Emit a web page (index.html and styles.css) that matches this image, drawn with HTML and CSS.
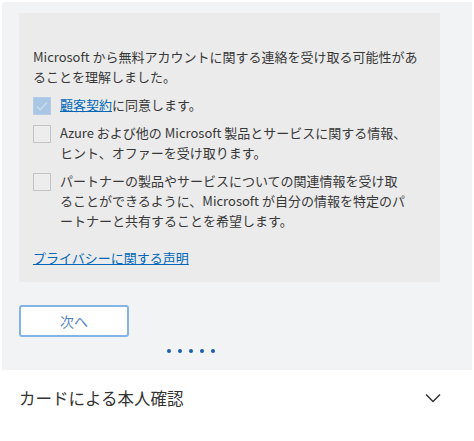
FILE: index.html
```html
<!DOCTYPE html>
<html lang="ja">
<head>
    <meta charset="UTF-8">
    <meta name="viewport" content="width=device-width, initial-scale=1.0">
    <title>サインアップ</title>
    <link rel="stylesheet" href="styles.css">
</head>
<body>
    <div class="panel">
        <div class="agreement">
            <p class="notice">Microsoft から無料アカウントに関する連絡を受け取る可能性があることを理解しました。</p>
            <label class="check-row">
                <span class="checkbox checked">
                    <svg viewBox="0 0 18 18" width="18" height="18"><path d="M4 9.5l3.2 3.2L14 5.5" fill="none" stroke="#c9dcef" stroke-width="1.6"/></svg>
                </span>
                <span class="check-text"><a href="#" class="link">顧客契約</a>に同意します。</span>
            </label>
            <label class="check-row">
                <span class="checkbox"></span>
                <span class="check-text">Azure および他の Microsoft 製品とサービスに関する情報、ヒント、オファーを受け取ります。</span>
            </label>
            <label class="check-row">
                <span class="checkbox"></span>
                <span class="check-text">パートナーの製品やサービスについての関連情報を受け取ることができるように、Microsoft が自分の情報を特定のパートナーと共有することを希望します。</span>
            </label>
            <a href="#" class="link privacy">プライバシーに関する声明</a>
        </div>
        <button class="next-button">次へ</button>
        <div class="dots">
            <span></span><span></span><span></span><span></span><span></span>
        </div>
    </div>

    <div class="section-header">
        <span class="section-title">カードによる本人確認</span>
        <svg class="chevron" viewBox="0 0 16 10" width="16" height="10"><path d="M1 1.5l7 7 7-7" fill="none" stroke="#333" stroke-width="1.5"/></svg>
    </div>
</body>
</html>
```

FILE: styles.css
```css
* {
    margin: 0;
    padding: 0;
    box-sizing: border-box;
    font-family: "Noto Sans CJK JP", "Noto Sans", sans-serif;
}

body {
    background: white;
    color: #383838;
}

.panel {
    background: #f2f3f5;
    margin: 2px 2px 0;
    padding: 11px 0 17px 17px;
}

.agreement {
    background: #ebebeb;
    width: 421px;
    padding: 34px 21px 14px 14px;
    font-size: 13px;
    line-height: 20px;
}

.notice {
    margin-bottom: 8px;
}

.check-row {
    display: flex;
    gap: 9px;
    margin-bottom: 8px;
    padding-right: 9.5px;
    cursor: pointer;
}

.checkbox {
    flex: none;
    width: 18px;
    height: 18px;
    margin-top: 2px;
    border: 1px solid #c4c4c4;
    background: #ededed;
    display: flex;
}

.checkbox.checked {
    background: #a9c6e4;
    border-color: #b3cde8;
}

.checkbox svg {
    margin: -1px;
}

.link {
    color: #0067b8;
    text-decoration: underline;
}

.privacy {
    display: inline-block;
    margin-top: 9px;
}

.next-button {
    display: block;
    margin-top: 23px;
    width: 110px;
    height: 32px;
    background: white;
    border: 2px solid #82b4e6;
    border-radius: 3px;
    color: #5585c0;
    font-size: 14px;
    cursor: pointer;
}

.dots {
    display: flex;
    gap: 7px;
    margin: 12px 0 0 148px;
}

.dots span {
    width: 4px;
    height: 4px;
    border-radius: 50%;
    background: #1d5ea8;
}

.section-header {
    display: flex;
    justify-content: space-between;
    align-items: center;
    padding: 16px 33px 0 19px;
}

.section-title {
    font-size: 16.5px;
    line-height: 24px;
    color: #333;
}
```
